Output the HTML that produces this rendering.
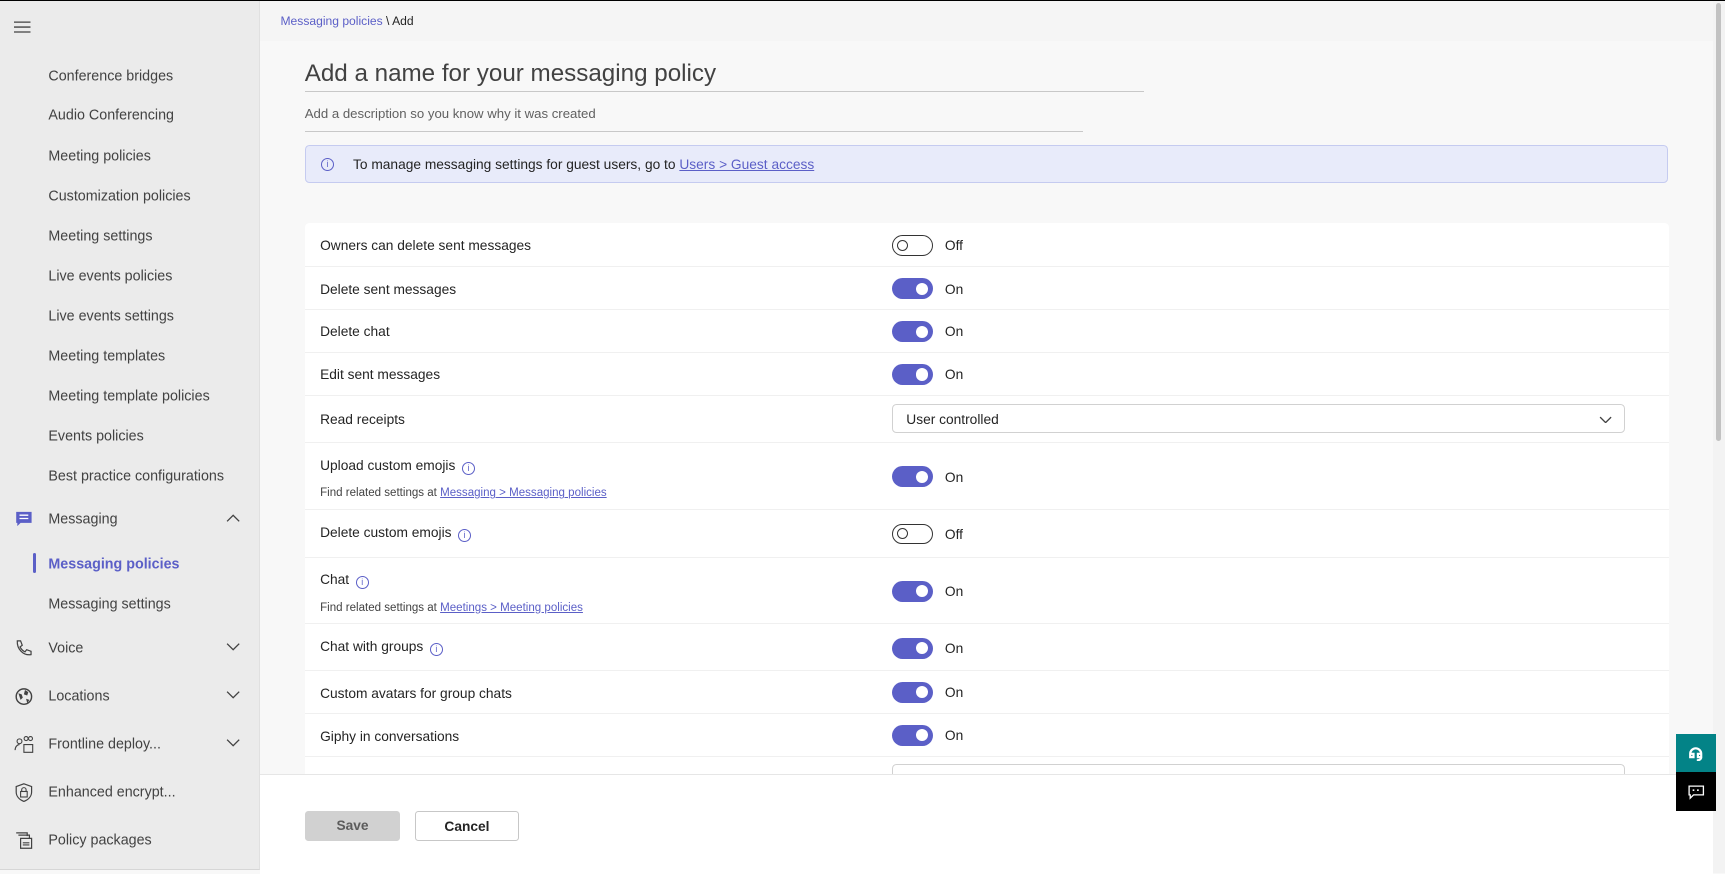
<!DOCTYPE html>
<html><head><meta charset="utf-8"><style>
html,body{margin:0;padding:0;}
body{width:1568px;height:794px;zoom:1.1;overflow:hidden;position:relative;font-family:"Liberation Sans",sans-serif;color:#242424;background:#f8f8f8;}
.top{position:absolute;left:0;top:0;width:1568px;height:1px;background:#000;z-index:5}
.side{position:absolute;left:0;top:0;width:235px;height:790px;background:#ebebeb;border-right:1px solid #e0e0e0;border-bottom:1px solid #d6d6d6}
.side .it{position:absolute;left:44px;font-size:13px;color:#424242;transform:translateY(-40%)}
.side .ic{position:absolute;left:13px;width:18px;height:18px;transform:translateY(-42%)}
.side .chev{position:absolute;left:205px;transform:translateY(-50%)}
.main{position:absolute;left:236px;top:1px;width:1321px;height:793px;}
.hdr{position:absolute;left:0;top:0;width:1321px;height:36px;background:#f5f5f5}
.bc{position:absolute;left:19px;top:12px;font-size:11px;color:#242424}
.bc a{color:#5b5fc7;text-decoration:none}
.title{position:absolute;left:41px;top:54px;font-size:22px;color:#424242;width:763px;height:28px;border-bottom:1px solid #c8c8c8}
.desc{position:absolute;left:41px;top:95px;font-size:12px;color:#616161;width:708px;height:23px;border-bottom:1px solid #c8c8c8}
.ban{position:absolute;left:41px;top:131px;width:1238px;height:33px;background:#e8ebfa;border:1px solid #c5cbf0;border-radius:4px;font-size:12.5px;color:#242424}
.ban span.t{position:absolute;left:43px;top:10px}
.ban a{color:#5b5fc7;text-decoration:underline}
.card{position:absolute;left:41px;top:202px;width:1240px;height:510px;background:#fff;border-radius:4px}
.row{position:absolute;left:0;width:1240px;border-bottom:1px solid #f0f0f0}
.lab{position:absolute;left:14px;font-size:12.5px;color:#242424}
.sub{position:absolute;left:14px;font-size:10.5px;color:#424242}
.sub a{color:#5b5fc7;text-decoration:underline}
.tg{position:absolute;left:534px;width:37px;height:19px;border-radius:10px;box-sizing:border-box}
.tg.on{background:#5b5fc7}
.tg.on:after{content:"";position:absolute;right:4px;top:4px;width:11px;height:11px;border-radius:50%;background:#fff}
.tg.off{border:1px solid #333;background:#fff}
.tg.off:after{content:"";position:absolute;left:4px;top:3px;width:10px;height:10px;border-radius:50%;border:1px solid #333;box-sizing:border-box}
.tl{position:absolute;left:582px;font-size:12.5px}
.info{display:inline-block;width:10px;height:10px;border:1px solid #5b5fc7;border-radius:50%;font-size:8px;color:#5b5fc7;text-align:center;line-height:10px;margin-left:6px;vertical-align:-1px}
.dd{position:absolute;left:534px;width:664px;height:27px;border:1px solid #d1d1d1;border-radius:4px;font-size:12.5px;box-sizing:border-box}
.foot{position:absolute;left:0;top:703px;width:1321px;height:90px;background:#fff;border-top:1px solid #e6e6e6}
.btn{position:absolute;top:32px;height:28px;box-sizing:border-box;border-radius:3px;font-size:12.5px;font-weight:bold;text-align:center;line-height:27px}
.sb{position:absolute;left:1557px;top:1px;width:11px;height:793px;background:#f3f3f3}
.sb i{position:absolute;left:3px;top:2px;width:5px;height:398px;background:#c2c2c2;border-radius:3px}
</style></head><body>
<div class="top"></div>
<div class="side">
<svg style="position:absolute;left:13px;top:19px" width="16" height="11"><path d="M0 1h15M0 5.5h15M0 10h15" stroke="#424242" stroke-width="1.2"/></svg>
<div class="it" style="top:68px">Conference bridges</div>
<div class="it" style="top:104px">Audio Conferencing</div>
<div class="it" style="top:141px">Meeting policies</div>
<div class="it" style="top:177px">Customization policies</div>
<div class="it" style="top:214px">Meeting settings</div>
<div class="it" style="top:250px">Live events policies</div>
<div class="it" style="top:286px">Live events settings</div>
<div class="it" style="top:323px">Meeting templates</div>
<div class="it" style="top:359px">Meeting template policies</div>
<div class="it" style="top:395px">Events policies</div>
<div class="it" style="top:432px">Best practice configurations</div>
<svg class="ic" style="top:471px" viewBox="0 0 18 18"><path d="M2 2h14v10H6l-3 3v-3H2z" fill="#5b5fc7"/><path d="M5 5h8M5 8h8" stroke="#fff" stroke-width="1.2"/></svg>
<div class="it" style="top:471px">Messaging</div>
<svg class="chev" style="top:471px" width="13" height="8"><path d="M1 7l5.5-5.5L12 7" fill="none" stroke="#424242" stroke-width="1.2"/></svg>
<div style="position:absolute;left:30px;top:503px;width:3px;height:18px;background:#5b5fc7;border-radius:2px"></div>
<div class="it" style="top:512px;color:#5b5fc7;font-weight:bold">Messaging policies</div>
<div class="it" style="top:548px">Messaging settings</div>
<svg class="ic" style="top:588px" viewBox="0 0 18 18"><path d="M3 2l3 0 1.5 4-2 1.5c1 2 2.5 3.5 4.5 4.5L11.5 10l4 1.5v3c-7 1-13-5-12.5-12.5z" fill="none" stroke="#424242" stroke-width="1.1"/></svg>
<div class="it" style="top:588px">Voice</div>
<svg class="chev" style="top:588px" width="13" height="8"><path d="M1 1l5.5 5.5L12 1" fill="none" stroke="#424242" stroke-width="1.2"/></svg>
<svg class="ic" style="top:632px" viewBox="0 0 18 18"><circle cx="9" cy="9" r="7" fill="none" stroke="#424242" stroke-width="1.3"/><path d="M4 6l3 1 1 3-2 2zM10 3l3 2-1 3-3-1zM11 11l3 1-2 3z" fill="#424242"/></svg>
<div class="it" style="top:632px">Locations</div>
<svg class="chev" style="top:632px" width="13" height="8"><path d="M1 1l5.5 5.5L12 1" fill="none" stroke="#424242" stroke-width="1.2"/></svg>
<svg class="ic" style="top:675px" viewBox="0 0 18 18"><circle cx="5" cy="6" r="2.2" fill="none" stroke="#424242"/><circle cx="11" cy="3.5" r="1.8" fill="none" stroke="#424242"/><circle cx="15" cy="3.5" r="1.8" fill="none" stroke="#424242"/><path d="M1 14c0-3 2-5 4-5M9 9h8v7H9z" fill="none" stroke="#424242"/></svg>
<div class="it" style="top:675px">Frontline deploy...</div>
<svg class="chev" style="top:675px" width="13" height="8"><path d="M1 1l5.5 5.5L12 1" fill="none" stroke="#424242" stroke-width="1.2"/></svg>
<svg class="ic" style="top:719px" viewBox="0 0 18 18"><path d="M9 1l7 2.5v5c0 4-3 7-7 8.5-4-1.5-7-4.5-7-8.5v-5z" fill="none" stroke="#424242" stroke-width="1.1"/><rect x="6" y="8" width="6" height="5" fill="none" stroke="#424242"/><path d="M7 8V6.5a2 2 0 014 0V8" fill="none" stroke="#424242"/></svg>
<div class="it" style="top:719px">Enhanced encrypt...</div>
<svg class="ic" style="top:763px" viewBox="0 0 18 18"><path d="M2 2h10v3M4 4h10v3M6 7h10v9H6z" fill="none" stroke="#424242" stroke-width="1.1"/><path d="M8 11h6M8 13h6" stroke="#424242"/></svg>
<div class="it" style="top:763px">Policy packages</div>
</div>
<div class="main">
<div class="hdr"><div class="bc"><a>Messaging policies</a> \ Add</div></div>
<div class="title">Add a name for your messaging policy</div>
<div class="desc">Add a description so you know why it was created</div>
<div class="ban"><span class="info" style="position:absolute;left:14px;top:11px;margin:0;width:10px;height:10px">i</span><span class="t">To manage messaging settings for guest users, go to <a>Users &gt; Guest access</a></span></div>
<div class="card">
<div class="row" style="top:0;height:39px"><div class="lab" style="top:13px">Owners can delete sent messages</div><div class="tg off" style="top:11px"></div><div class="tl" style="top:13px">Off</div></div>
<div class="row" style="top:40px;height:38px"><div class="lab" style="top:13px">Delete sent messages</div><div class="tg on" style="top:10px"></div><div class="tl" style="top:13px">On</div></div>
<div class="row" style="top:79px;height:38px"><div class="lab" style="top:13px">Delete chat</div><div class="tg on" style="top:10px"></div><div class="tl" style="top:13px">On</div></div>
<div class="row" style="top:118px;height:38px"><div class="lab" style="top:13px">Edit sent messages</div><div class="tg on" style="top:10px"></div><div class="tl" style="top:13px">On</div></div>
<div class="row" style="top:157px;height:42px"><div class="lab" style="top:15px">Read receipts</div><div class="dd" style="top:7px;width:666px"><span style="position:absolute;left:12px;top:7px">User controlled</span><svg style="position:absolute;right:10px;top:10px" width="12" height="7"><path d="M1 1l5 5 5-5" fill="none" stroke="#424242" stroke-width="1.2"/></svg></div></div>
<div class="row" style="top:200px;height:60px"><div class="lab" style="top:13px">Upload custom emojis<span class="info">i</span></div><div class="sub" style="top:40px">Find related settings at <a>Messaging &gt; Messaging policies</a></div><div class="tg on" style="top:21px"></div><div class="tl" style="top:24px">On</div></div>
<div class="row" style="top:261px;height:42px"><div class="lab" style="top:13px">Delete custom emojis<span class="info">i</span></div><div class="tg off" style="top:12px"></div><div class="tl" style="top:15px">Off</div></div>
<div class="row" style="top:304px;height:59px"><div class="lab" style="top:13px">Chat<span class="info">i</span></div><div class="sub" style="top:40px">Find related settings at <a>Meetings &gt; Meeting policies</a></div><div class="tg on" style="top:21px"></div><div class="tl" style="top:24px">On</div></div>
<div class="row" style="top:364px;height:42px"><div class="lab" style="top:14px">Chat with groups<span class="info">i</span></div><div class="tg on" style="top:13px"></div><div class="tl" style="top:16px">On</div></div>
<div class="row" style="top:407px;height:38px"><div class="lab" style="top:14px">Custom avatars for group chats</div><div class="tg on" style="top:10px"></div><div class="tl" style="top:13px">On</div></div>
<div class="row" style="top:446px;height:38px"><div class="lab" style="top:14px">Giphy in conversations</div><div class="tg on" style="top:10px"></div><div class="tl" style="top:13px">On</div></div>
<div class="dd" style="top:492px;height:30px;width:666px"></div>
</div>
<div class="foot">
<div class="btn" style="left:41px;width:87px;background:#d1d1d1;color:#5c5c5c">Save</div>
<div class="btn" style="left:141px;width:95px;background:#fff;border:1px solid #c7c7c7">Cancel</div>
</div>
</div>
<div class="sb"><i></i></div>
<div style="position:absolute;left:1524px;top:667px;width:36px;height:35px;background:#038387"><svg style="position:absolute;left:11px;top:10px" width="14" height="15"><path d="M2 8a5 5 0 0110 0v3H9V8h3M2 8v3h3V8H2M12 11c0 2-2 3-4 3" fill="none" stroke="#fff" stroke-width="2"/></svg></div>
<div style="position:absolute;left:1524px;top:702px;width:36px;height:35px;background:#000"><svg style="position:absolute;left:11px;top:12px" width="15" height="13"><path d="M1 1h13v8H5l-3 3V9H1z" fill="none" stroke="#fff" stroke-width="1.2"/><path d="M5 4v1.5M9 4v1.5" stroke="#fff" stroke-width="1.5"/></svg></div>
</body></html>
